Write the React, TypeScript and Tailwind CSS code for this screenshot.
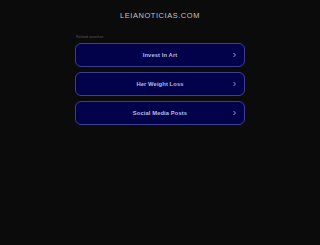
import React from 'react'

const links = ['Invest In Art', 'Her Weight Loss', 'Social Media Posts']

const App = () => {
    return (
        <div className='min-h-[245px] w-full bg-[#0b0b0b] flex flex-col items-center' style={{ fontFamily: 'Arial, "Liberation Sans", sans-serif' }}>
            <h1 className='mt-[11px] text-[7.4px] leading-[9px] tracking-[0.6px] text-[#c4c4c4]'>LEIANOTICIAS.COM</h1>

            <div className='mt-[15px] w-[170px] flex flex-col'>
                <p className='text-[3.5px] leading-[4px] text-[#5c5c5c] pl-px'>Related searches</p>
                <div className='mt-[4px] flex flex-col gap-[5px]'>
                    {links.map((item) => (
                        <a
                            key={item}
                            href='#'
                            className='relative h-[24px] flex items-center justify-center rounded-[6px] border border-[#3b3f8f] bg-[#02024a] text-[5.8px] font-semibold tracking-[0.1px] text-[#b8bae8]'
                        >
                            {item}
                            <svg className='absolute right-[8px] top-1/2 -translate-y-1/2' width='3' height='5' viewBox='0 0 3 5' fill='none'>
                                <path d='M0.5 0.5 L2.5 2.5 L0.5 4.5' stroke='#b4b6e8' strokeWidth='0.8' />
                            </svg>
                        </a>
                    ))}
                </div>
            </div>
        </div>
    )
}

export default App
